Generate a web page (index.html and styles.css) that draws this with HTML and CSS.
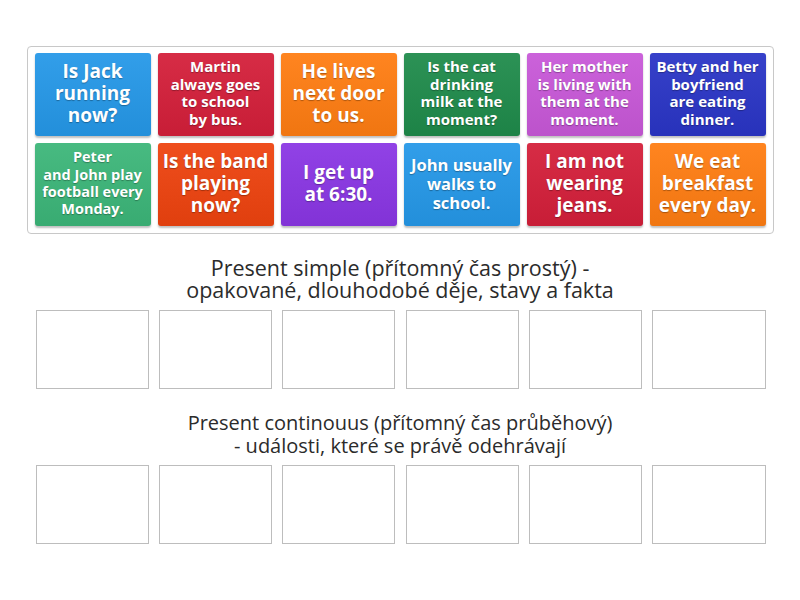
FILE: index.html
```html
<!DOCTYPE html>
<html lang="cs">
<head>
    <meta charset="UTF-8">
    <meta name="viewport" content="width=device-width, initial-scale=1.0">
    <title>Present simple / Present continuous</title>
    <link rel="stylesheet" href="styles.css">
</head>
<body>

    <div class="page">
        <!-- cards to sort -->
        <div class="tray">
            <div class="card blue big">Is Jack<br>running<br>now?</div>
            <div class="card red small">Martin<br>always goes<br>to school<br>by bus.</div>
            <div class="card orange big">He lives<br>next door<br>to us.</div>
            <div class="card green small">Is the cat<br>drinking<br>milk at the<br>moment?</div>
            <div class="card pink small">Her mother<br>is living with<br>them at the<br>moment.</div>
            <div class="card navy small">Betty and her<br>boyfriend<br>are eating<br>dinner.</div>

            <div class="card mint tiny">Peter<br>and John play<br>football every<br>Monday.</div>
            <div class="card flame big">Is the band<br>playing<br>now?</div>
            <div class="card violet big">I get up<br>at 6:30.</div>
            <div class="card blue mid">John usually<br>walks to<br>school.</div>
            <div class="card red big">I am not<br>wearing<br>jeans.</div>
            <div class="card orange big">We eat<br>breakfast<br>every day.</div>
        </div>

        <!-- group 1 -->
        <h2 class="group-title">Present simple (přítomný čas prostý) -<br>opakované, dlouhodobé děje, stavy a fakta</h2>
        <div class="slots">
            <div class="slot"></div>
            <div class="slot"></div>
            <div class="slot"></div>
            <div class="slot"></div>
            <div class="slot"></div>
            <div class="slot"></div>
        </div>

        <!-- group 2 -->
        <h2 class="group-title long">Present continouus (přítomný čas průběhový)<br>- události, které se právě odehrávají</h2>
        <div class="slots">
            <div class="slot"></div>
            <div class="slot"></div>
            <div class="slot"></div>
            <div class="slot"></div>
            <div class="slot"></div>
            <div class="slot"></div>
        </div>
    </div>

</body>
</html>
```

FILE: styles.css
```css
body {
    margin: 0;
    background-color: #fff;
    font-family: "Open Sans", "Liberation Sans", sans-serif;
    color: #2b2b2b;
}

.page {
    width: 747px;
    margin: 46px auto 0;
}

/* Card tray */
.tray {
    display: grid;
    grid-template-columns: repeat(6, 116px);
    grid-auto-rows: 83px;
    gap: 7px;
    padding: 6px 7px 7px;
    border: 1px solid #c8c8c8;
    border-radius: 4px;
}

.card {
    display: flex;
    align-items: center;
    justify-content: center;
    padding-bottom: 3px;
    text-align: center;
    white-space: nowrap;
    color: #fff;
    font-weight: 700;
    border-radius: 3px;
    box-shadow: 0 2px 2px rgba(0, 0, 0, 0.25);
    text-shadow: 0 1px 1px rgba(0, 0, 0, 0.3);
    background-image: linear-gradient(rgba(255, 255, 255, 0.06), rgba(0, 0, 0, 0.06));
}

.big { font-size: 19px; line-height: 22px; }
.mid { font-size: 16.5px; line-height: 19px; }
.small { font-size: 15px; line-height: 17.5px; }
.tiny { font-size: 14.5px; line-height: 17.3px; }

.blue { background-color: #2598e8; }
.red { background-color: #d41f3a; }
.orange { background-color: #ff7d12; }
.green { background-color: #1f8b4b; }
.pink { background-color: #c858d8; }
.navy { background-color: #2a35c6; }
.mint { background-color: #3cb679; }
.flame { background-color: #ee430f; }
.violet { background-color: #8a36e4; }

/* Drop groups */
.group-title {
    margin: 23px 0 9px;
    font-size: 21.5px;
    font-weight: 400;
    line-height: 22px;
    text-align: center;
}

.group-title.long {
    margin-bottom: 8px;
    font-size: 20px;
    line-height: 22.5px;
}

.slots {
    display: grid;
    grid-template-columns: repeat(6, 1fr);
    gap: 10.4px;
    height: 79px;
    margin: 0 8px 0 9px;
}

.slot {
    border: 1px solid #bdbdbd;
}
```
